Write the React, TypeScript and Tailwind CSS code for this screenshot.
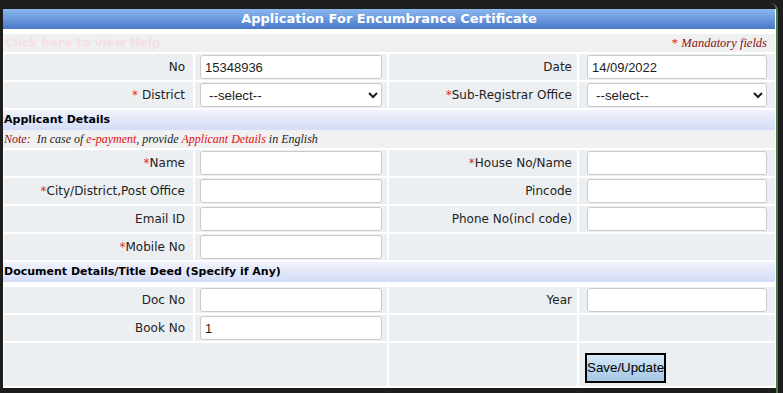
import React from 'react';

const COLS = 'grid grid-cols-[189px_192px_188px_196px] gap-x-[2px]';
const CELL = 'bg-[#eceff2]';

function Star({ space = false }: { space?: boolean }) {
  return <span className="text-[#dd3333]">*{space ? ' ' : ''}</span>;
}

function Label({ children, right = false }: { children: React.ReactNode; right?: boolean }) {
  return (
    <div className={`${CELL} flex items-center justify-end ${right ? 'pr-[5px]' : 'pr-[8px]'} text-[12px] text-[#222]`}>
      <span>{children}</span>
    </div>
  );
}

function Field({ value = '', right = false }: { value?: string; right?: boolean }) {
  return (
    <div className={`${CELL} flex items-center ${right ? 'pl-[8px]' : 'pl-[5px]'}`}>
      <input
        readOnly
        value={value}
        className={`h-[24px] ${right ? 'w-[180px]' : 'w-[182px]'} rounded-[3px] border border-[#cacaca] bg-white px-[4px] font-['Liberation_Sans',Arial,sans-serif] text-[13px] text-[#1d1d1d] outline-none`}
      />
    </div>
  );
}

function Picker({ right = false }: { right?: boolean }) {
  return (
    <div className={`${CELL} flex items-center ${right ? 'pl-[8px]' : 'pl-[5px]'}`}>
      <select
        defaultValue=""
        className={`h-[24px] ${right ? 'w-[180px]' : 'w-[182px]'} rounded-[3px] border border-[#cacaca] bg-white pl-[4px] font-['Liberation_Sans',Arial,sans-serif] text-[13.33px] text-[#1d1d1d] outline-none`}
      >
        <option value="">--select--</option>
      </select>
    </div>
  );
}

function Section({ title }: { title: string }) {
  return (
    <div className="flex h-[20px] items-center bg-gradient-to-b from-[#f1f3fc] to-[#d4dcf8] pl-[1px] text-[11px] font-bold text-black">
      {title}
    </div>
  );
}

export default function App() {
  return (
    <div className="h-[393px] w-[783px] overflow-hidden bg-[#1d1d1d] font-['DejaVu_Sans',Verdana,sans-serif]">
      <div className="ml-[3px] mt-[3px] h-[390px] w-[775px] rounded-tr-[8px] border-r-2 border-[#4d7a4d]">
        <div className="h-[6px]" />
        <div className="flex h-[379px] flex-col bg-white pr-[1px]">
          <div className="flex h-[20px] items-center justify-center bg-gradient-to-b from-[#8cb8ef] to-[#4a78c8] text-[13px] font-bold text-white">
            Application For Encumbrance Certificate
          </div>
          <div className="h-[5px]" />
          <div className="flex h-[18px] items-center justify-between bg-[#eef0f2] pl-[2px] pr-[8px]">
            <span className="text-[12px] font-bold text-[#f6e0e3]">Click here to view Help</span>
            <span className="font-['Liberation_Serif',serif] text-[12.5px] italic text-[#8a1010]">
              <span className="not-italic text-[#e02020]">*</span> Mandatory fields
            </span>
          </div>

          <div className="mt-[2px] flex flex-col gap-[2px] pl-[1px]">
            <div className={`${COLS} h-[26px]`}>
              <Label>No</Label>
              <Field value="15348936" />
              <Label right>Date</Label>
              <Field value="14/09/2022" right />
            </div>
            <div className={`${COLS} h-[26px]`}>
              <Label>
                <Star space />District
              </Label>
              <Picker />
              <Label right>
                <Star />Sub-Registrar Office
              </Label>
              <Picker right />
            </div>
          </div>

          <div className="mt-[2px]">
            <Section title="Applicant Details" />
          </div>
          <div className="flex h-[18px] items-center bg-[#f1f1f2] pl-[1px] font-['Liberation_Serif',serif] text-[12px] italic text-[#222]">
            <span className="text-[#8a1010]">Note:</span>
            <span className="whitespace-pre">{'  In case of '}</span>
            <span className="text-[#e01010]">e-payment</span>
            <span className="whitespace-pre">{', provide '}</span>
            <span className="text-[#e01010]">Applicant Details</span>
            <span className="whitespace-pre">{' in English'}</span>
          </div>

          <div className="mt-[2px] flex flex-col gap-[2px] pl-[1px]">
            <div className={`${COLS} h-[26px]`}>
              <Label>
                <Star />Name
              </Label>
              <Field />
              <Label right>
                <Star />House No/Name
              </Label>
              <Field right />
            </div>
            <div className={`${COLS} h-[26px]`}>
              <Label>
                <Star />City/District,Post Office
              </Label>
              <Field />
              <Label right>Pincode</Label>
              <Field right />
            </div>
            <div className={`${COLS} h-[26px]`}>
              <Label>Email ID</Label>
              <Field />
              <Label right>Phone No(incl code)</Label>
              <Field right />
            </div>
            <div className={`${COLS} h-[26px]`}>
              <Label>
                <Star />Mobile No
              </Label>
              <Field />
              <div className={`${CELL} col-span-2`} />
            </div>
          </div>

          <div className="mt-[2px]">
            <Section title="Document Details/Title Deed (Specify if Any)" />
          </div>

          <div className="mt-[5px] flex flex-col gap-[2px] pl-[1px]">
            <div className={`${COLS} h-[26px]`}>
              <Label>Doc No</Label>
              <Field />
              <Label right>Year</Label>
              <Field right />
            </div>
            <div className={`${COLS} h-[26px]`}>
              <Label>Book No</Label>
              <Field value="1" />
              <div className={CELL} />
              <div className={CELL} />
            </div>
            <div className={`${COLS} h-[43px]`}>
              <div className={`${CELL} col-span-2`} />
              <div className={CELL} />
              <div className={`${CELL} pl-[6px] pt-[10px]`}>
                <button
                  type="button"
                  className="h-[30px] w-[81px] border-2 border-black bg-gradient-to-b from-[#d4e8f8] to-[#a5c6e4] p-0 font-['Liberation_Sans',Arial,sans-serif] text-[13.33px] text-black"
                >
                  Save/Update
                </button>
              </div>
            </div>
          </div>
        </div>
      </div>
    </div>
  );
}
